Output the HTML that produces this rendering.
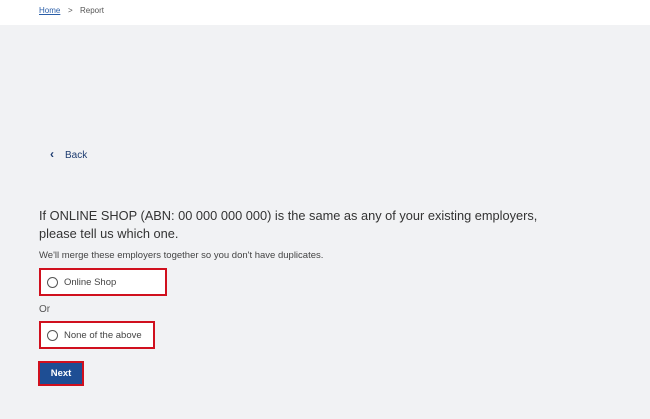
<!DOCTYPE html>
<html><head><style>
body{margin:0;width:650px;height:419px;background:#f1f2f4;font-family:"Liberation Sans",sans-serif;position:relative;overflow:hidden}
.hdr{position:absolute;left:0;top:0;width:650px;height:25px;background:#fff}
.a{position:absolute;white-space:nowrap}
.box{position:absolute;border:2px solid #d0101e;background:#fff;box-sizing:border-box}
.rad{position:absolute;left:6px;top:7px;width:11px;height:11px;border:1px solid #555;border-radius:50%;box-sizing:border-box}
</style></head><body>
<div class="hdr"></div>
<div class="a" style="left:39px;top:6px;font-size:8px;color:#2a5ea8;text-decoration:underline">Home</div>
<div class="a" style="left:68px;top:6px;font-size:8px;color:#555">&gt;</div>
<div class="a" style="left:80px;top:6px;font-size:8px;color:#555">Report</div>
<div class="a" style="left:50px;top:147px;font-size:12px;color:#1d3c70;font-weight:bold">&#8249;</div>
<div class="a" style="left:65px;top:150px;font-size:10px;color:#1d3c70">Back</div>
<div class="a" style="left:39px;top:207px;font-size:12.8px;color:#333;line-height:18px">If ONLINE SHOP (ABN: 00 000 000 000) is the same as any of your existing employers,<br>please tell us which one.</div>
<div class="a" style="left:39px;top:250px;font-size:9.5px;color:#444">We'll merge these employers together so you don't have duplicates.</div>
<div class="box" style="left:39px;top:268px;width:128px;height:28px"><div class="rad"></div><div class="a" style="left:23px;top:7px;font-size:9.5px;color:#444">Online Shop</div></div>
<div class="a" style="left:39px;top:304px;font-size:10px;color:#555">Or</div>
<div class="box" style="left:39px;top:321px;width:116px;height:28px"><div class="rad"></div><div class="a" style="left:23px;top:7px;font-size:9.5px;color:#444">None of the above</div></div>
<div class="box" style="left:38px;top:361px;width:46px;height:25px;background:#1e4e94;border-width:2px"><div class="a" style="left:0;width:42px;text-align:center;top:5px;font-size:9.5px;color:#fff;font-weight:bold">Next</div></div>
</body></html>
